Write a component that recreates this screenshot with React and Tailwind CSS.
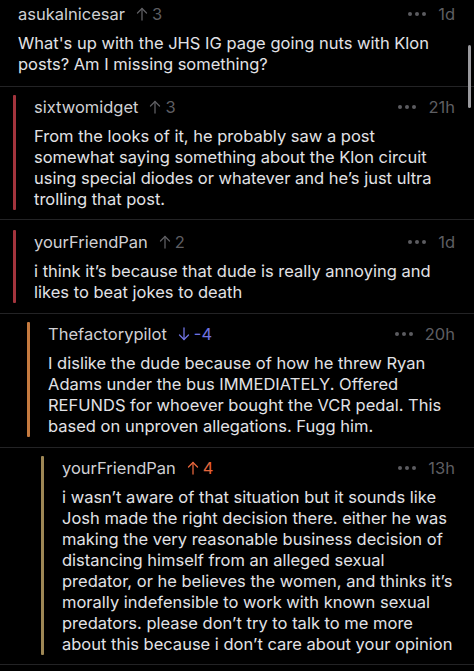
import React from "react";

const comments = [
  {
    level: 0,
    user: "asukalnicesar",
    vote: "up",
    score: "3",
    time: "1d",
    pt: "pt-[2px]",
    pb: "pb-[11px]",
    lines: [
      "What's up with the JHS IG page going nuts with Klon",
      "posts? Am I missing something?",
    ],
  },
  {
    level: 1,
    bar: "bg-[#a3343d]",
    user: "sixtwomidget",
    vote: "up",
    score: "3",
    time: "21h",
    pt: "pt-[8px]",
    pb: "pb-[9px]",
    lines: [
      "From the looks of it, he probably saw a post",
      "somewhat saying something about the Klon circuit",
      "using special diodes or whatever and he\u2019s just ultra",
      "trolling that post.",
    ],
  },
  {
    level: 1,
    bar: "bg-[#a3343d]",
    user: "yourFriendPan",
    vote: "up",
    score: "2",
    time: "1d",
    pt: "pt-[10px]",
    pb: "pb-[10px]",
    lines: [
      "i think it\u2019s because that dude is really annoying and",
      "likes to beat jokes to death",
    ],
  },
  {
    level: 2,
    bar: "bg-[#c57a3f]",
    user: "Thefactorypilot",
    vote: "down",
    score: "-4",
    time: "20h",
    pt: "pt-[8px]",
    pb: "pb-[10px]",
    lines: [
      "I dislike the dude because of how he threw Ryan",
      "Adams under the bus IMMEDIATELY. Offered",
      "REFUNDS for whoever bought the VCR pedal. This",
      "based on unproven allegations. Fugg him.",
    ],
  },
  {
    level: 3,
    bar: "bg-[#9e8755]",
    user: "yourFriendPan",
    vote: "upvoted",
    score: "4",
    time: "13h",
    pt: "pt-[8px]",
    pb: "pb-[9px]",
    lines: [
      "i wasn\u2019t aware of that situation but it sounds like",
      "Josh made the right decision there. either he was",
      "making the very reasonable business decision of",
      "distancing himself from an alleged sexual",
      "predator, or he believes the women, and thinks it\u2019s",
      "morally indefensible to work with known sexual",
      "predators. please don\u2019t try to talk to me more",
      "about this because i don\u2019t care about your opinion",
    ],
  },
];

function ArrowUp({ className }) {
  return (
    <svg viewBox="0 0 12 14" className={className} fill="none" stroke="currentColor" strokeWidth="1.3" strokeLinecap="round" strokeLinejoin="round">
      <path d="M6 13V1.5" />
      <path d="M1.5 6L6 1.5L10.5 6" />
    </svg>
  );
}

function ArrowDown({ className }) {
  return (
    <svg viewBox="0 0 12 14" className={className} fill="none" stroke="currentColor" strokeWidth="1.3" strokeLinecap="round" strokeLinejoin="round">
      <path d="M6 1V12.5" />
      <path d="M1.5 8L6 12.5L10.5 8" />
    </svg>
  );
}

function Dots() {
  return (
    <div className="flex items-center gap-[3px]">
      <span className="w-[4px] h-[4px] rounded-full bg-[#5c5c60]" />
      <span className="w-[4px] h-[4px] rounded-full bg-[#5c5c60]" />
      <span className="w-[4px] h-[4px] rounded-full bg-[#5c5c60]" />
    </div>
  );
}

function Vote({ vote, score }) {
  if (vote === "down") {
    return (
      <div className="flex items-center gap-[4px] text-[#6f72e0]">
        <ArrowDown className="w-[12px] h-[14px]" />
        <span>{score}</span>
      </div>
    );
  }
  if (vote === "upvoted") {
    return (
      <div className="flex items-center gap-[4px] text-[#e4653b]">
        <ArrowUp className="w-[12px] h-[14px]" />
        <span>{score}</span>
      </div>
    );
  }
  return (
    <div className="flex items-center gap-[4px] text-[#5e5e62]">
      <ArrowUp className="w-[12px] h-[14px]" />
      <span>{score}</span>
    </div>
  );
}

const padLeft = {
  0: "pl-[18px]",
  1: "pl-[13px]",
  2: "pl-[27px]",
  3: "pl-[41px]",
};

function Comment({ c }) {
  return (
    <div className={`${c.pt} ${c.pb} pr-[19px] ${padLeft[c.level]} flex`}>
      {c.level > 0 && <div className={`w-[3px] shrink-0 rounded-[1px] ${c.bar} mr-[18px]`} />}
      <div className="flex-1 min-w-0">
        <div className="h-[24px] flex items-center justify-between">
          <div className="flex items-center gap-[11px]">
            <span className="text-[#d0d0d4]">{c.user}</span>
            <Vote vote={c.vote} score={c.score} />
          </div>
          <div className="flex items-center gap-[12px]">
            <Dots />
            <span className="text-[#5e5e62]">{c.time}</span>
          </div>
        </div>
        <div className="mt-[7px] text-[#e2e2e6] leading-[21px]">
          {c.lines.map((l, i) => (
            <div key={i} className="whitespace-nowrap">{l}</div>
          ))}
        </div>
      </div>
    </div>
  );
}

export default function App() {
  return (
    <div
      className="relative w-[474px] h-[671px] overflow-hidden bg-black text-[16.5px] tracking-normal"
      style={{ fontFamily: "Inter, 'Liberation Sans', sans-serif" }}
    >
      {comments.map((c, i) => (
        <div key={i}>
          {i > 0 && <div className="h-px bg-[#232325]" />}
          <Comment c={c} />
        </div>
      ))}
      <div className="h-px bg-[#232325]" />
      <div className="absolute right-[3px] top-[45px] w-[3px] h-[63px] rounded-full bg-[#9a9a9e]" />
    </div>
  );
}
